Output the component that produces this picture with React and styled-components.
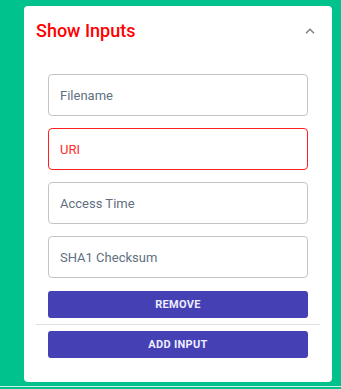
import React from "react";
import styled, { createGlobalStyle } from "styled-components";

const GlobalStyle = createGlobalStyle`
    html, body {
        margin: 0;
        padding: 0;
        background: #00c28c;
        font-family: Roboto, "Liberation Sans", sans-serif;
    }
`;

const Page = styled.div`
    width: 341px;
    height: 389px;
    display: flex;
    flex-direction: column;
`;

const Card = styled.div`
    background: #fff;
    border-radius: 4px;
    height: 376px;
    margin: 6px 9px 0 24px;
    padding: 13px 12px 0;
    box-sizing: border-box;
    display: flex;
    flex-direction: column;
`;

const BottomLine = styled.div`
    margin-top: 4px;
    height: 1px;
    background: #d6ebe3;
`;

const Header = styled.div`
    display: flex;
    justify-content: space-between;
    align-items: center;
    height: 24px;
    padding-right: 5px;
`;

const Title = styled.span`
    color: #ff0000;
    font-size: 18px;
    font-weight: 500;
    line-height: 24px;
`;

const Fields = styled.div`
    display: flex;
    flex-direction: column;
    gap: 12px;
    padding: 0 12px;
    margin: 31px 0 13px;
`;

const Field = styled.div`
    height: 42px;
    box-sizing: border-box;
    border: 1px solid ${props => (props.error ? "#ff1f1f" : "#c4c4c4")};
    border-radius: 4px;
    display: flex;
    align-items: center;
    padding-left: 11px;
    font-size: 13px;
    color: ${props => (props.error ? "#ff2a2a" : "#5f7080")};
`;

const Btn = styled.button`
    display: block;
    width: 260px;
    height: 27px;
    margin: 0 12px;
    border: none;
    border-radius: 3px;
    background: #4541b5;
    color: #eeeeff;
    font-family: Roboto, "Liberation Sans", sans-serif;
    font-size: 11px;
    font-weight: 700;
    letter-spacing: 0.3px;
    padding: 0;
`;

const Divider = styled.hr`
    border: none;
    height: 1px;
    background: #e0e0e0;
    margin: 6px 0 6px;
`;

const Chevron = () => (
    <svg width="10" height="6" viewBox="0 0 10 6">
        <path d="M1 5.2 L5 1.2 L9 5.2" fill="none" stroke="#7a7a7a" strokeWidth="1.3" />
    </svg>
);

const App = () => {
    return (
        <Page>
            <GlobalStyle />
            <Card>
                <Header>
                    <Title>Show Inputs</Title>
                    <Chevron />
                </Header>
                <Fields>
                    <Field>Filename</Field>
                    <Field error>URI</Field>
                    <Field>Access Time</Field>
                    <Field>SHA1 Checksum</Field>
                </Fields>
                <Btn>REMOVE</Btn>
                <Divider />
                <Btn>ADD INPUT</Btn>
            </Card>
            <BottomLine />
        </Page>
    );
};

export default App;
